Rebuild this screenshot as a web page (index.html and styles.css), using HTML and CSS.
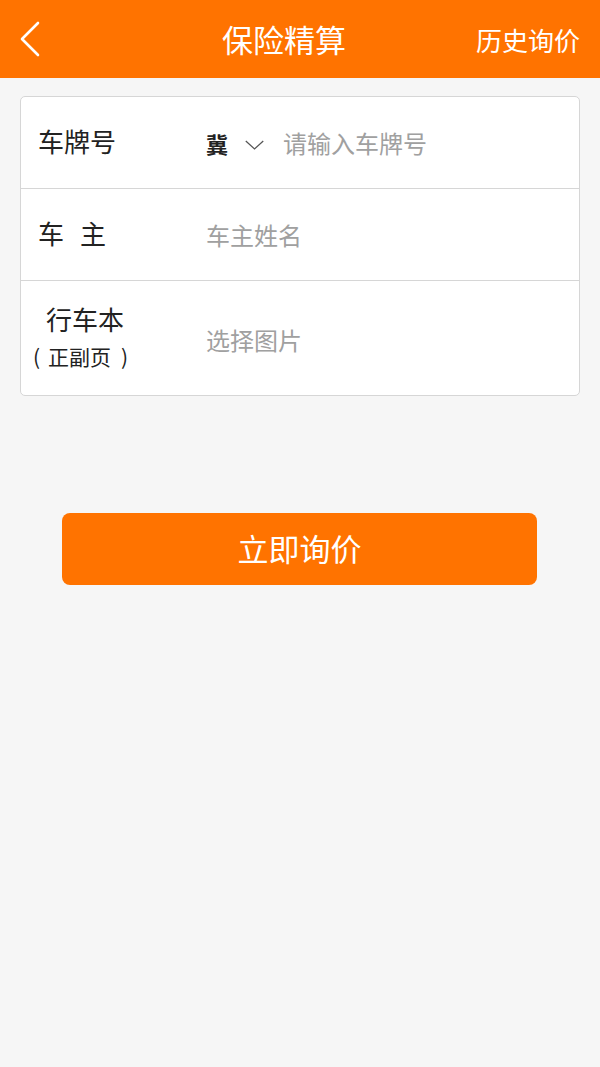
FILE: index.html
```html
<!DOCTYPE html>
<html lang="zh-CN">
<head>
    <meta charset="UTF-8">
    <meta name="viewport" content="width=device-width, initial-scale=1.0">
    <title>保险精算</title>
    <link rel="stylesheet" href="styles.css">
</head>
<body>

    <header class="top-bar">
        <a class="back-btn" href="#">
            <svg width="24" height="36" viewBox="0 0 24 36">
                <polyline points="20,2 4,18 20,34" fill="none" stroke="#fff" stroke-width="2.6" stroke-linecap="round" stroke-linejoin="round"/>
            </svg>
        </a>
        <h1 class="title">保险精算</h1>
        <a class="history-link" href="#">历史询价</a>
    </header>

    <div class="form-card">
        <div class="form-row row-plate">
            <div class="label">车牌号</div>
            <div class="field">
                <span class="province">冀</span>
                <svg class="arrow" width="24" height="14" viewBox="0 0 24 14">
                    <polyline points="1,2 12,12 23,2" fill="none" stroke="#555" stroke-width="1.6"/>
                </svg>
                <input type="text" class="text-input plate-input" placeholder="请输入车牌号">
            </div>
        </div>
        <div class="form-row row-owner">
            <div class="label">车<span class="gap"></span>主</div>
            <div class="field">
                <input type="text" class="text-input" placeholder="车主姓名">
            </div>
        </div>
        <div class="form-row row-license">
            <div class="label label-stack">
                <span class="main">行车本</span>
                <span class="sub"><span class="paren-l">(</span>正副页<span class="paren-r">)</span></span>
            </div>
            <div class="field">
                <span class="picker">选择图片</span>
            </div>
        </div>
    </div>

    <button class="submit-btn">立即询价</button>

</body>
</html>
```

FILE: styles.css
```css
body {
    margin: 0;
    background: #f6f6f6;
    font-family: "Noto Sans CJK SC", "Noto Sans", sans-serif;
    color: #222;
    min-height: 1067px;
}

.top-bar {
    height: 78px;
    background: #ff7300;
    display: flex;
    align-items: center;
    justify-content: space-between;
    padding: 0 20px 0 18px;
    position: relative;
}

.back-btn {
    display: flex;
    align-items: center;
    height: 36px;
}

.title {
    position: absolute;
    left: 0;
    right: 32px;
    text-align: center;
    margin: 0;
    font-size: 31px;
    font-weight: normal;
    color: #fff;
    pointer-events: none;
    line-height: 78px;
}

.history-link {
    color: #fff;
    text-decoration: none;
    font-size: 26px;
}

.form-card {
    margin: 18px 20px 0 20px;
    background: #fff;
    border: 1px solid #d6d6d6;
    border-radius: 5px;
}

.form-row {
    display: flex;
    align-items: center;
    border-bottom: 1px solid #d6d6d6;
}

.form-row:last-child {
    border-bottom: none;
}

.row-plate, .row-owner {
    height: 91px;
}

.row-license {
    height: 114px;
}

.label {
    width: 168px;
    padding-left: 17px;
    font-size: 26px;
    color: #222;
    flex-shrink: 0;
    box-sizing: border-box;
    margin-top: -4px;
}

.gap {
    display: inline-block;
    width: 16px;
}

.label-stack {
    display: flex;
    flex-direction: column;
    padding-left: 12px;
    margin-top: -2px;
}

.label-stack .main {
    padding-left: 13px;
    line-height: 38px;
}

.label-stack .sub {
    font-size: 21px;
    line-height: 36px;
}

.paren-l {
    margin-right: 8px;
}

.paren-r {
    margin-left: 10px;
}

.field {
    flex: 1;
    display: flex;
    align-items: center;
    padding-left: 17px;
}

.province {
    font-size: 22px;
    font-weight: bold;
    color: #222;
}

.arrow {
    margin: 4px 19px 0 17px;
}

.text-input {
    border: none;
    outline: none;
    font-family: inherit;
    font-size: 24px;
    padding: 0;
    color: #222;
    width: 100%;
    background: transparent;
}

.text-input::placeholder {
    color: #a0a0a0;
}

.picker {
    font-size: 24px;
    color: #a0a0a0;
    margin-top: 2px;
}

.submit-btn {
    display: block;
    width: 475px;
    height: 72px;
    margin: 117px auto 0 62px;
    background: #ff7300;
    border: none;
    border-radius: 8px;
    color: #fff;
    font-family: inherit;
    font-size: 31px;
    line-height: 1;
    padding-bottom: 4px;
    cursor: pointer;
}
```
